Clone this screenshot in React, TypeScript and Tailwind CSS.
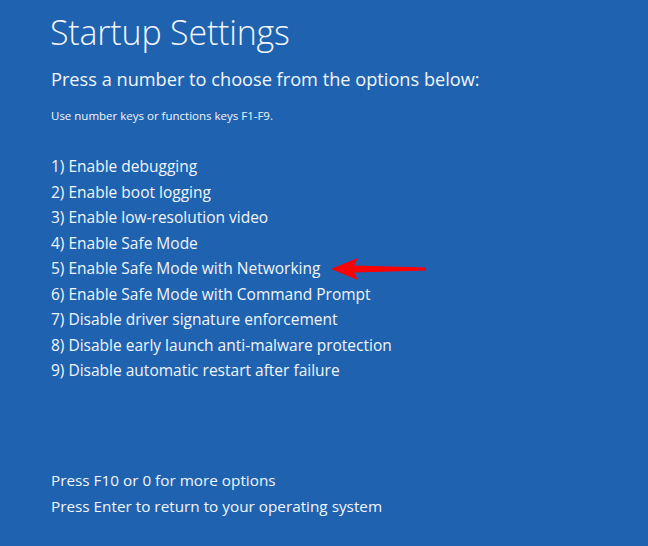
import React from "react";

const items = [
  "1) Enable debugging",
  "2) Enable boot logging",
  "3) Enable low-resolution video",
  "4) Enable Safe Mode",
  "5) Enable Safe Mode with Networking",
  "6) Enable Safe Mode with Command Prompt",
  "7) Disable driver signature enforcement",
  "8) Disable early launch anti-malware protection",
  "9) Disable automatic restart after failure",
];

export default function App() {
  return (
    <div
      className="w-[648px] h-[546px] bg-[#1f63b0] text-[#f2f5fa] overflow-hidden flex flex-col pl-[51px]"
      style={{ fontFamily: '"Open Sans", "Noto Sans", sans-serif' }}
    >
      <h1 className="text-[34px] font-light leading-[40px] mt-[12px] -ml-[1px] tracking-[-0.2px]">Startup Settings</h1>
      <p className="text-[18.2px] leading-[24px] mt-[15px]">Press a number to choose from the options below:</p>
      <p className="text-[11.5px] leading-[16px] mt-[17px]">Use number keys or functions keys F1-F9.</p>
      <ul className="mt-[30px] flex flex-col">
        {items.map((t, i) => (
          <li key={i} className="text-[15.5px] leading-[25.5px] flex items-center">
            <span>{t}</span>
            {i === 4 && (
              <svg width="96" height="24" viewBox="0 0 96 24" className="ml-[11px] mt-[1px]">
                <path d="M0 12 L27 1 L23 8.5 L95 10.5 L95 13.5 L23 15.5 L27 23 Z" fill="#ff0000" />
              </svg>
            )}
          </li>
        ))}
      </ul>
      <div className="mt-auto mb-[27px] flex flex-col">
        <p className="text-[15.3px] leading-[26px]">Press F10 or 0 for more options</p>
        <p className="text-[15.3px] leading-[26px]">Press Enter to return to your operating system</p>
      </div>
    </div>
  );
}
